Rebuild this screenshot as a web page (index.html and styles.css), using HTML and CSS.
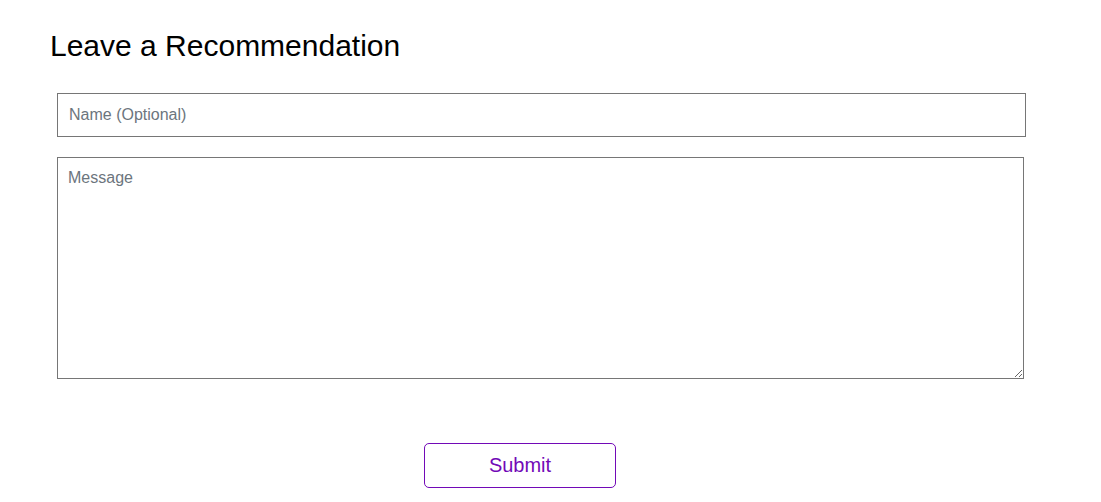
FILE: index.html
```html
<!DOCTYPE html>
<html lang="en">
<head>
<meta charset="utf-8">
<title>Leave a Recommendation</title>
<link rel="stylesheet" href="styles.css">
</head>
<body>
<section class="recommend">
  <h2 class="title">Leave a Recommendation</h2>
  <form class="form">
    <input class="field name" type="text" placeholder="Name (Optional)">
    <textarea class="field message" placeholder="Message"></textarea>
    <div class="actions">
      <button class="submit" type="button">Submit</button>
    </div>
  </form>
</section>
</body>
</html>
```
FILE: styles.css
```css
html, body {
  margin: 0;
  padding: 0;
  background: #ffffff;
}
body {
  font-family: "Liberation Sans", Arial, sans-serif;
}
.recommend {
  padding: 0 0 0 50px;
}
.title {
  margin: 0;
  padding-top: 28px;
  font-size: 30px;
  font-weight: normal;
  line-height: 36px;
  color: #000;
}
.form {
  display: flex;
  flex-direction: column;
  align-items: flex-start;
  padding-left: 7px;
  margin-top: 29px;
}
.field {
  box-sizing: border-box;
  border: 1px solid #767676;
  border-radius: 0;
  font-family: "Liberation Sans", Arial, sans-serif;
  font-size: 16px;
  color: #000;
  margin: 0;
  outline: none;
}
.field::placeholder {
  color: #6c757d;
}
.name {
  width: 969px;
  height: 44px;
  padding: 0 11px;
}
.message {
  width: 967px;
  height: 222px;
  margin-top: 20px;
  padding: 11px 10px;
  resize: both;
}
.actions {
  margin-top: 64px;
  padding-left: 367px;
}
.submit {
  box-sizing: border-box;
  width: 192px;
  height: 45px;
  background: #fff;
  border: 1px solid #7209b7;
  border-radius: 5px;
  color: #7209b7;
  font-family: "Liberation Sans", Arial, sans-serif;
  font-size: 20px;
  cursor: pointer;
}
```
